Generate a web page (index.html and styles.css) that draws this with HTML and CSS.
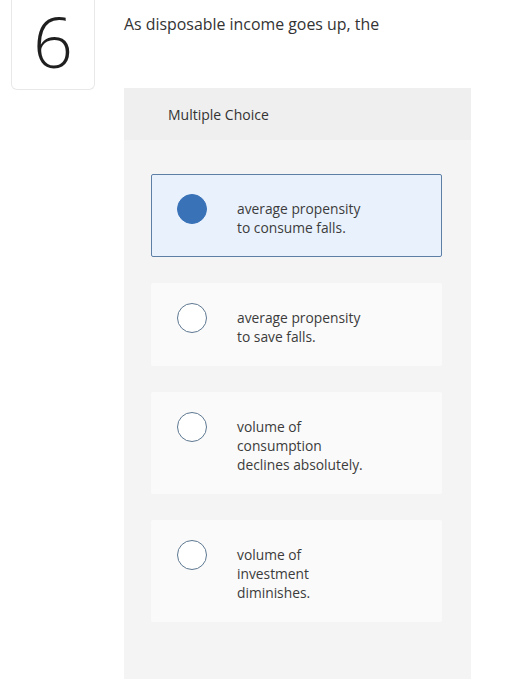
FILE: index.html
```html
<!DOCTYPE html>
<html lang="en">
<head>
<meta charset="utf-8">
<title>Question 6</title>
<link rel="stylesheet" href="styles.css">
</head>
<body>
<div class="question">
  <div class="qnum">6</div>
  <div class="qbody">
    <p class="prompt">As disposable income goes up, the</p>
    <div class="panel">
      <div class="panel-head">Multiple Choice</div>
      <div class="panel-body">
        <div class="option selected">
          <span class="radio"></span>
          <span class="label">average propensity to consume falls.</span>
        </div>
        <div class="option">
          <span class="radio"></span>
          <span class="label">average propensity to save falls.</span>
        </div>
        <div class="option">
          <span class="radio"></span>
          <span class="label">volume of consumption declines absolutely.</span>
        </div>
        <div class="option">
          <span class="radio"></span>
          <span class="label">volume of investment diminishes.</span>
        </div>
      </div>
    </div>
  </div>
</div>
</body>
</html>
```

FILE: styles.css
```css
html, body {
  margin: 0;
  padding: 0;
  background: #ffffff;
}

body {
  font-family: "Open Sans", "Liberation Sans", sans-serif;
  color: #333333;
  overflow: hidden;
}

.question {
  display: flex;
  align-items: flex-start;
  padding-left: 11px;
  gap: 29px;
}

.qnum {
  width: 84px;
  height: 90px;
  box-sizing: border-box;
  border: 1px solid #e8e8e8;
  border-top: none;
  border-radius: 0 0 6px 6px;
  display: flex;
  align-items: center;
  justify-content: center;
  padding-bottom: 8px;
  font-size: 70px;
  font-weight: 300;
  color: #1f1f1f;
  line-height: 1;
}

.qbody {
  width: 347px;
}

.prompt {
  margin: 0;
  padding-top: 13px;
  font-size: 15.9px;
  line-height: 22px;
  color: #333333;
  height: 88px;
  box-sizing: border-box;
}

.panel {
  background: #f4f4f4;
}

.panel-head {
  height: 52px;
  background: #efefef;
  display: flex;
  align-items: center;
  padding-left: 44px;
  font-size: 14px;
  color: #333333;
}

.panel-body {
  padding: 34px 29px 57px 27px;
  display: flex;
  flex-direction: column;
  gap: 26px;
}

.option {
  display: flex;
  align-items: flex-start;
  gap: 30px;
  padding: 19px 26px 19px 25px;
  background: #fafafa;
  border: 1px solid transparent;
  border-radius: 2px;
}

.option.selected {
  background: #e9f2fc;
  border-color: #5d7fa6;
}

.radio {
  flex: none;
  width: 30px;
  height: 30px;
  box-sizing: border-box;
  border-radius: 50%;
  border: 1.5px solid #5e7891;
  background: #ffffff;
}

.option.selected .radio {
  background: #3a72b8;
  border-color: #3a72b8;
}

.label {
  margin-top: 5px;
  width: 134px;
  font-size: 13.8px;
  line-height: 19px;
  color: #3c3c3c;
}
```
